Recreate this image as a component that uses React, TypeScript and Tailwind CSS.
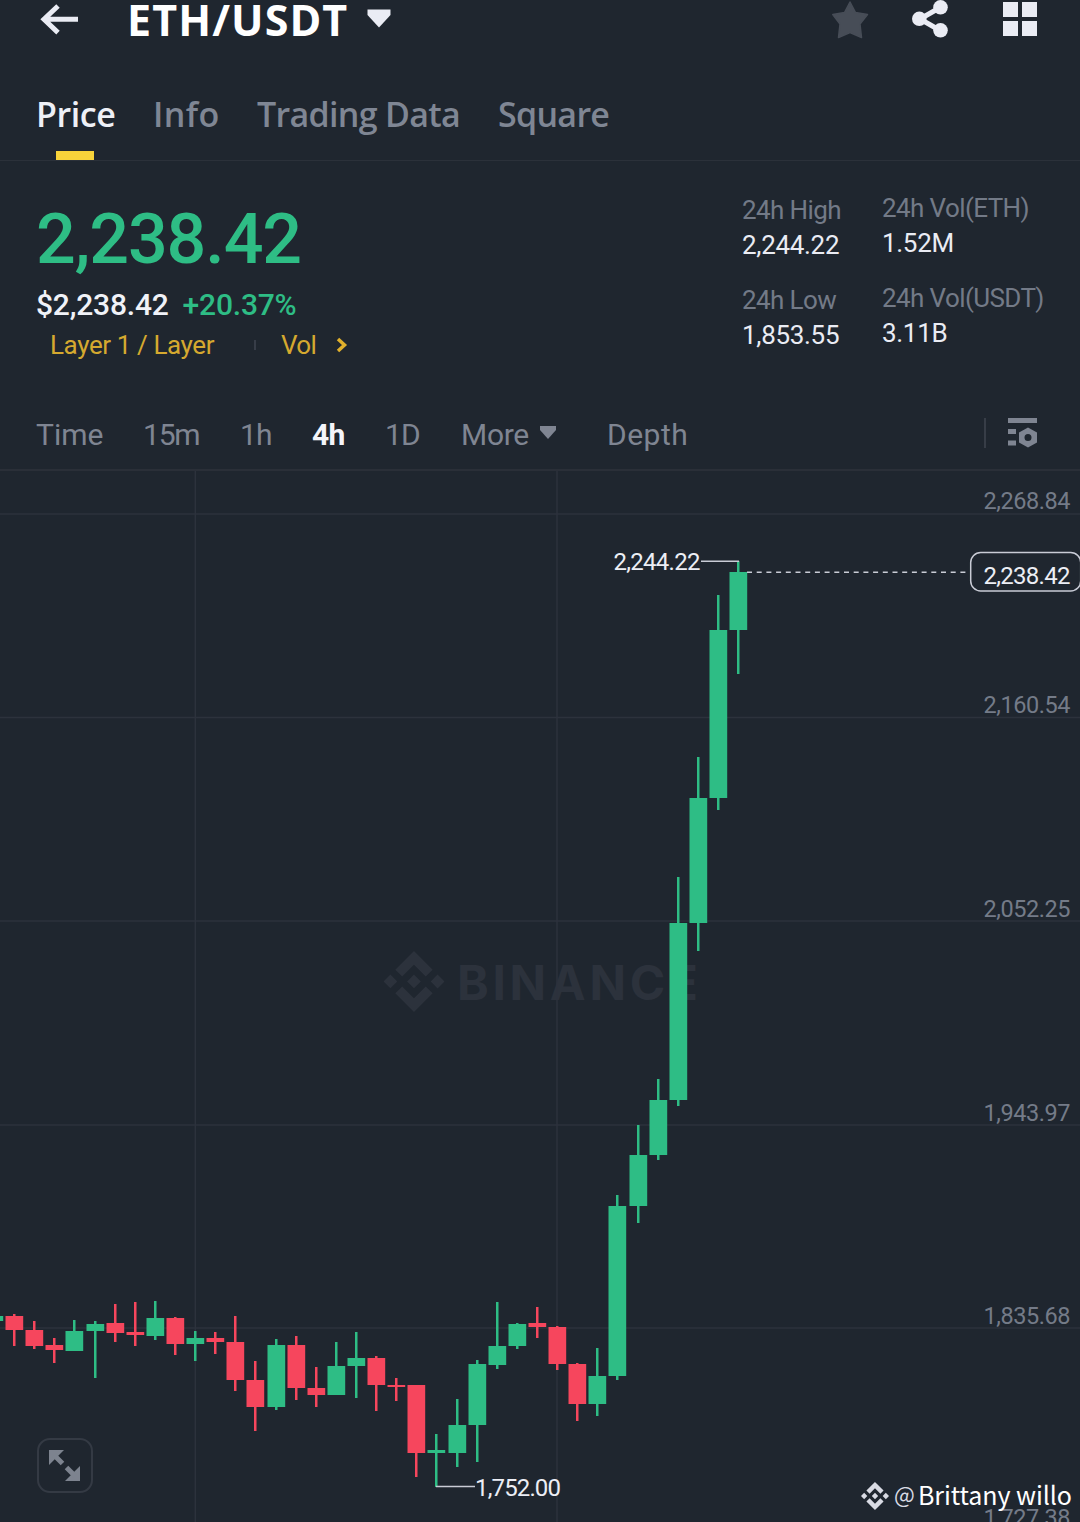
import { SiBinance } from "react-icons/si";

type Candle = {
  x: number;
  high: number;
  top: number;
  bottom: number;
  low: number;
  up: boolean;
};

const UP = "#2ebd85";
const DOWN = "#f6465d";

// x, high, body top, body bottom, low, up
const rows: [number, number, number, number, number, number][] = [
  [-6, 1316, 1316, 1321, 1321, 1],
  [14, 1314, 1316, 1330, 1346, 0],
  [34, 1321, 1330, 1346, 1349, 0],
  [54, 1338, 1345, 1350, 1363, 0],
  [74, 1320, 1331, 1351, 1351, 1],
  [95, 1321, 1324, 1331, 1378, 1],
  [115, 1304, 1323, 1333, 1342, 0],
  [135, 1302, 1332, 1335, 1346, 0],
  [155, 1301, 1318, 1336, 1340, 1],
  [175, 1317, 1318, 1344, 1355, 0],
  [195, 1331, 1338, 1344, 1361, 1],
  [215, 1332, 1338, 1342, 1354, 0],
  [235, 1316, 1342, 1380, 1391, 0],
  [255, 1361, 1380, 1407, 1431, 0],
  [276, 1339, 1345, 1407, 1410, 1],
  [296, 1336, 1345, 1388, 1400, 0],
  [316, 1367, 1388, 1395, 1407, 0],
  [336, 1342, 1366, 1395, 1395, 1],
  [356, 1332, 1358, 1366, 1398, 1],
  [376, 1356, 1358, 1385, 1411, 0],
  [396, 1378, 1385, 1387, 1401, 0],
  [416, 1385, 1385, 1453, 1477, 0],
  [436, 1434, 1450, 1453, 1487, 1],
  [457, 1399, 1425, 1453, 1467, 1],
  [477, 1360, 1364, 1425, 1462, 1],
  [497, 1302, 1346, 1365, 1369, 1],
  [517, 1323, 1324, 1346, 1349, 1],
  [537, 1307, 1323, 1327, 1338, 0],
  [557, 1326, 1327, 1364, 1370, 0],
  [577, 1363, 1364, 1404, 1421, 0],
  [597, 1348, 1376, 1404, 1416, 1],
  [617, 1195, 1206, 1376, 1380, 1],
  [638, 1125, 1155, 1206, 1223, 1],
  [658, 1079, 1100, 1155, 1160, 1],
  [678, 877, 923, 1100, 1106, 1],
  [698, 757, 798, 923, 951, 1],
  [718, 595, 630, 798, 810, 1],
  [738, 561, 572, 630, 674, 1],
];

const candles: Candle[] = rows.map(([x, high, top, bottom, low, up]) => ({
  x,
  high,
  top,
  bottom,
  low,
  up: up === 1,
}));

const gridLines = [514, 717.5, 921, 1125, 1328];

const priceLabels = [
  { y: 509, text: "2,268.84" },
  { y: 713, text: "2,160.54" },
  { y: 917, text: "2,052.25" },
  { y: 1121, text: "1,943.97" },
  { y: 1324, text: "1,835.68" },
  { y: 1526, text: "1,727.38" },
];

function Header() {
  return (
    <header className="flex h-[60px] items-start pl-[40px]">
      <svg className="mt-[4px] h-[32px] w-[40px] shrink-0" viewBox="0 0 40 32" fill="none">
        <path d="M38 15.3H5M18 2L4 15.3L18 28.6" stroke="#eaecf4" strokeWidth="5" />
      </svg>
      <h1 className="ml-[47px] w-[220px] whitespace-nowrap font-['Open_Sans'] text-[43px] font-bold leading-[40px] tracking-[1.100px] text-white">
        ETH/USDT
      </h1>
      <svg className="ml-[20px] mt-[9px] h-[19px] w-[24px]" viewBox="0 0 24 19">
        <path d="M0.5 0.5H23.5V6L12 18.5L0.5 6Z" fill="#eaecf4" />
      </svg>
      <div className="ml-auto mr-[43px] flex items-start">
        <svg className="h-[40px] w-[38px]" viewBox="0 0 38 40">
          <path
            d="M18 2L23.500 12.500L35.500 14.500L28 24L29.500 37.500L18 32.500L6.500 37.500L8 24L0.800 14.500L12.500 12.500Z"
            fill="#474d57"
            stroke="#474d57"
            strokeWidth="1.5"
            strokeLinejoin="round"
          />
        </svg>
        <svg className="ml-[42px] h-[38px] w-[37px]" viewBox="0 0 37 38">
          <path d="M29 7L8 19L29 31" stroke="#eaecf4" strokeWidth="5" fill="none" />
          <circle cx="28.500" cy="7.3" r="7.3" fill="#eaecf4" />
          <circle cx="7.3" cy="18.800" r="7.300" fill="#eaecf4" />
          <circle cx="28.500" cy="30.300" r="7.300" fill="#eaecf4" />
        </svg>
        <div className="ml-[54px] mt-[2px] grid grid-cols-2 gap-[4px]">
          <div className="size-[15px] bg-[#eaecf4]" />
          <div className="size-[15px] bg-[#eaecf4]" />
          <div className="size-[15px] bg-[#eaecf4]" />
          <div className="size-[15px] bg-[#eaecf4]" />
        </div>
      </div>
    </header>
  );
}

function Tabs() {
  return (
    <nav className="flex h-[101px] items-start border-b border-[#2b313a] pl-[36px] pt-[30px] font-['Open_Sans'] text-[34px] font-semibold leading-[48px] text-[#7f8694]">
      <div className="flex w-[117px] flex-col text-[#eef0f7]">
        <span className="tracking-[-0.4px]">Price</span>
        <span className="ml-[20px] mt-[13px] h-[9px] w-[38px] bg-[#f8d33a]" />
      </div>
      <span className="w-[104px] tracking-[0.400px]">Info</span>
      <span className="w-[241px] whitespace-nowrap tracking-[-0.700px]">Trading Data</span>
      <span className="tracking-[-0.700px]">Square</span>
    </nav>
  );
}

function Stat({ label, value }: { label: string; value: string }) {
  return (
    <div className="h-[90px] whitespace-nowrap">
      <div className="text-[26px] leading-[34px] tracking-[-0.6px] text-[#737a87]">{label}</div>
      <div className="text-[26px] leading-[36px] tracking-[-0.3px] text-[#eaecf4]">{value}</div>
    </div>
  );
}

function Summary() {
  return (
    <section className="flex h-[222px] pl-[36px]">
      <div className="w-[706px] pt-[38px]">
        <div className="text-[70px] font-medium leading-[80px] tracking-[-1.100px] text-[#2ebd85]">
          2,238.42
        </div>
        <div className="flex gap-[14px] text-[30px] font-medium leading-[52px] tracking-[-0.200px]">
          <span className="text-[#f0f2f8]">$2,238.42</span>
          <span className="text-[#2ebd85]">+20.37%</span>
        </div>
        <div className="flex items-center pl-[14px] text-[26px] leading-[28px] text-[#d5a92f]">
          <span className="w-[204px] tracking-[-0.400px]">Layer 1 / Layer</span>
          <span className="h-[10px] w-[2px] bg-[#373d48]" />
          <span className="ml-[25px] w-[55px] tracking-[-0.700px]">Vol</span>
          <svg className="h-[16px] w-[12px]" viewBox="0 0 12 16" fill="none">
            <path d="M2 2L8.500 8L2 14" stroke="#e0b02c" strokeWidth="3.500" />
          </svg>
        </div>
      </div>
      <div className="w-[140px] pt-[32px]">
        <Stat label="24h High" value="2,244.22" />
        <Stat label="24h Low" value="1,853.55" />
      </div>
      <div className="pt-[30px]">
        <Stat label="24h Vol(ETH)" value="1.52M" />
        <Stat label="24h Vol(USDT)" value="3.11B" />
      </div>
    </section>
  );
}

function Intervals() {
  return (
    <div className="flex h-[88px] items-center border-b-2 border-[#2a2f38] pl-[36px] pr-[42px] pt-[18px] text-[30px] leading-[40px] text-[#7f8592]">
      <span className="w-[107px]">Time</span>
      <span className="w-[97px] tracking-[-1.200px]">15m</span>
      <span className="w-[72px] tracking-[-0.800px]">1h</span>
      <span className="w-[73px] font-bold tracking-[-0.800px] text-[#f4f5fa]">4h</span>
      <span className="w-[76px] tracking-[-0.800px]">1D</span>
      <span className="w-[79px] tracking-[-0.300px]">More</span>
      <svg className="mb-[6px] h-[13px] w-[16px]" viewBox="0 0 16 13">
        <path d="M0 0H16V4L8 13L0 4Z" fill="#7f8592" />
      </svg>
      <span className="ml-[51px] tracking-[0.500px]">Depth</span>
      <span className="mb-[4px] ml-auto h-[30px] w-[2px] bg-[#373d47]" />
      <svg className="mb-[4px] ml-[22px] h-[30px] w-[30px]" viewBox="0 0 30 30" fill="#7f8592">
        <path d="M0 0H29V5H0ZM0 11H8V16H0ZM0 22.500H8V27.500H0Z" />
        <path
          fillRule="evenodd"
          d="M20 9.500L29 14.500V24.500L20 29.500L11 24.500V14.500ZM20 16A3.500 3.500 0 1 0 20 23A3.500 3.500 0 1 0 20 16Z"
        />
      </svg>
    </div>
  );
}

function Chart() {
  return (
    <svg className="block h-[1051px] w-[1080px]" viewBox="0 471 1080 1051">
      <g fill="#2c323c">
        <SiBinance x={383.5} y={951} size={61} color="#2c323c" />
        <text x="457" y="1000" fontFamily="Inter" fontWeight="700" fontSize="48" textLength="241">
          BINANCE
        </text>
      </g>

      <g stroke="#2c323c" strokeWidth="1.5">
        {gridLines.map((y) => (
          <line key={y} x1="0" x2="1080" y1={y} y2={y} />
        ))}
        <line x1="195.300" x2="195.300" y1="471" y2="1522" />
        <line x1="557" x2="557" y1="471" y2="1522" />
      </g>

      {candles.map((c) => (
        <g key={c.x} fill={c.up ? UP : DOWN}>
          <rect x={c.x - 1} y={c.high} width="2.500" height={c.low - c.high} />
          <rect x={c.x - 8.5} y={c.top} width="17.700" height={c.bottom - c.top} />
        </g>
      ))}

      <g stroke="#c9ccd6" strokeWidth="1.500" fill="none">
        <path d="M701 561.200H739" />
        <path d="M436 1486.500H475" />
        <path d="M747 572.200H970" strokeDasharray="5 4.700" />
        <rect x="970.700" y="552.500" width="110" height="38.500" rx="10" fill="#1f262f" />
      </g>

      <g fontFamily="Roboto" fontSize="23.500" fill="#747b88">
        {priceLabels.map((l) => (
          <text key={l.text} x="983.500" y={l.y} textLength="87">
            {l.text}
          </text>
        ))}
      </g>
      <g fontFamily="Roboto" fontSize="24" fill="#eceef5">
        <text x="983.500" y="584" textLength="87">2,238.42</text>
        <text x="613.500" y="570" textLength="87">2,244.22</text>
        <text x="475" y="1496" textLength="86">1,752.00</text>
      </g>

      <rect x="38" y="1439" width="54" height="53" rx="12" fill="none" stroke="#343a44" strokeWidth="2" />
      <g fill="#7d838f" stroke="#7d838f">
        <path d="M49 1450H64L49 1465Z" stroke="none" />
        <path d="M80 1481H65L80 1466Z" stroke="none" />
        <path d="M54 1455L62.500 1463.500M75 1476L66.500 1467.500" strokeWidth="5" />
      </g>

      <SiBinance x={861} y={1482} size={28} color="#d9dbe4" />
      <g fontFamily="'Noto Sans CJK SC', sans-serif" fontSize="25">
        <text x="894" y="1503" fontSize="22" fill="#d9dbe4">@</text>
        <text x="918" y="1505" textLength="154" fill="#ffffff">Brittany willo</text>
      </g>
    </svg>
  );
}

export default function App() {
  return (
    <main className="h-[1522px] w-[1080px] overflow-hidden bg-[#1f262f] font-['Roboto',sans-serif]">
      <Header />
      <Tabs />
      <Summary />
      <Intervals />
      <Chart />
    </main>
  );
}
